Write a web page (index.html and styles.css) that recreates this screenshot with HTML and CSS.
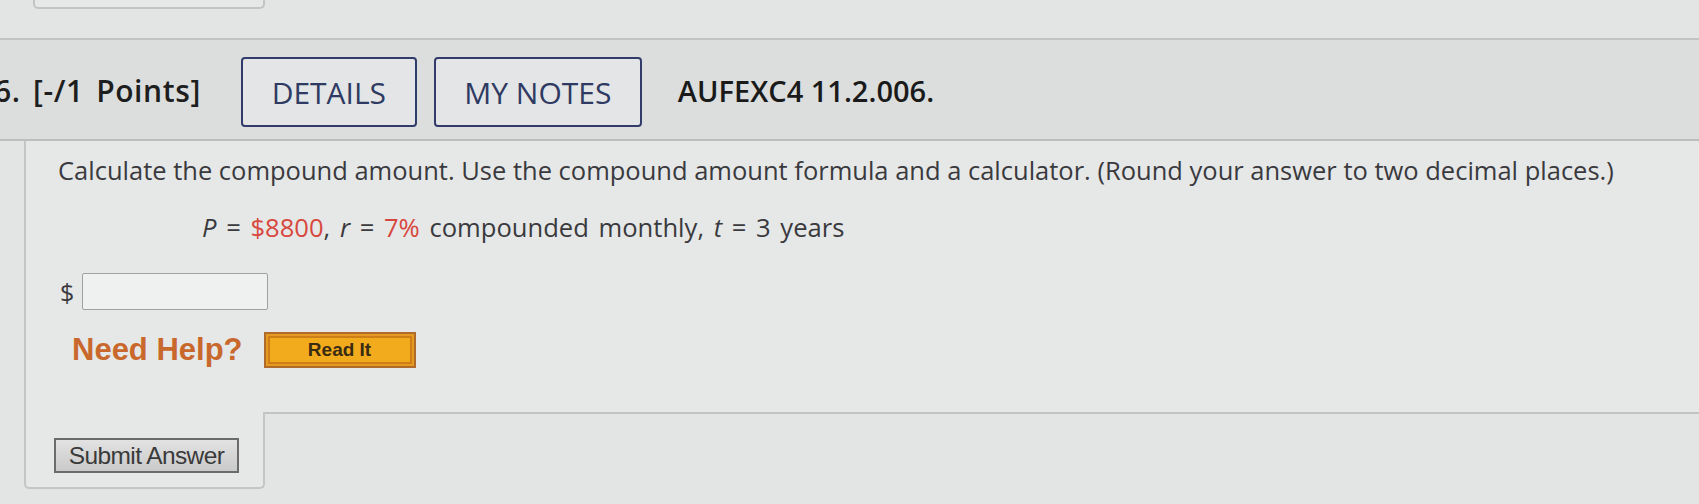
FILE: index.html
```html
<!DOCTYPE html>
<html lang="en">
<head>
<meta charset="utf-8">
<title>AUFEXC4 11.2.006</title>
<link rel="stylesheet" href="styles.css">
</head>
<body>
<div class="prev"></div>
<div class="header">
  <span class="num">6. [-/1 Points]</span>
  <button class="tab-btn details">DETAILS</button>
  <button class="tab-btn notes">MY NOTES</button>
  <span class="code">AUFEXC4 11.2.006.</span>
</div>
<div class="qbox">
  <p class="prompt">Calculate the compound amount. Use the compound amount formula and a calculator. (Round your answer to two decimal places.)</p>
  <p class="formula"><i>P</i> = <span class="red">$8800</span>, <i>r</i> = <span class="red">7%</span> compounded monthly, <i>t</i> = 3 years</p>
  <div class="answer"><span class="dollar">$</span><span class="input"></span></div>
  <div class="help"><span class="need">Need Help?</span><span class="readit"><span class="readit-in">Read It</span></span></div>
</div>
<div class="bottom">
  <div class="tab"><button class="submit">Submit Answer</button></div>
  <div class="filler"></div>
</div>
</body>
</html>
```
FILE: styles.css
```css
html, body {
  margin: 0;
  padding: 0;
}
body {
  width: 1699px;
  height: 504px;
  overflow: hidden;
  background: #e3e5e5;
  font-family: "Open Sans", "Liberation Sans", sans-serif;
  color: #333;
}
.prev {
  margin-left: 33px;
  width: 228px;
  height: 7px;
  border: 2px solid #c3c5c5;
  border-top: none;
  border-radius: 0 0 5px 5px;
  background: #e6e8e8;
}
.header {
  margin-top: 29px;
  height: 99px;
  border-top: 2px solid #c2c4c4;
  border-bottom: 2px solid #bcbebe;
  background: #dcdede;
  display: flex;
  align-items: flex-start;
}
.num {
  margin-left: -6px;
  margin-top: 30px;
  font-size: 30px;
  font-weight: 600;
  letter-spacing: 0.6px;
  word-spacing: 4px;
  color: #1e1e1e;
  white-space: nowrap;
}
.tab-btn {
  margin-top: 17px;
  height: 70px;
  border: 2px solid #313c6a;
  border-radius: 4px;
  background: #e3e5e6;
  color: #2f3a62;
  font-family: "Open Sans", sans-serif;
  font-size: 30px;
  font-weight: 400;
  padding: 0;
}
.details {
  margin-left: 40px;
  width: 176px;
}
.notes {
  margin-left: 17px;
  width: 208px;
}
.code {
  margin-left: 36px;
  margin-top: 31px;
  font-size: 29px;
  font-weight: 600;
  color: #1a1a1a;
  white-space: nowrap;
}
.qbox {
  border-left: 2px solid #c4c6c6;
  margin-left: 24px;
  background: #e6e8e8;
  padding: 12px 0 44px 32px;
}
.prompt {
  margin: 0;
  font-size: 25.5px;
  line-height: 34px;
  color: #3a3a3e;
  white-space: nowrap;
}
.formula {
  margin: 24px 0 0 144px;
  font-size: 25.6px;
  line-height: 34px;
  word-spacing: 3px;
  color: #3a3a3e;
  white-space: nowrap;
}
.red {
  color: #d8473d;
}
.answer {
  margin-top: 28px;
  display: flex;
  align-items: center;
  height: 37px;
}
.dollar {
  margin-left: 2px;
  font-size: 25px;
  color: #3a3a3e;
}
.input {
  margin-left: 8px;
  width: 184px;
  height: 35px;
  border: 1px solid #9ea0a2;
  border-radius: 2px;
  background: #eff1f1;
}
.help {
  margin-top: 22px;
  display: flex;
  align-items: center;
  height: 36px;
}
.need {
  margin-left: 14px;
  font-family: "Liberation Sans", Arial, sans-serif;
  font-weight: 700;
  font-size: 31px;
  color: #c9682c;
}
.readit {
  margin-left: 21px;
  width: 152px;
  height: 36px;
  box-sizing: border-box;
  border: 2px solid #b06a2a;
  background: #e79a22;
  padding: 2px;
  display: flex;
}
.readit-in {
  flex: 1;
  border: 2px solid #cd7e16;
  background: #f3ab1e;
  display: flex;
  align-items: center;
  justify-content: center;
  font-family: "Liberation Sans", Arial, sans-serif;
  font-weight: 700;
  font-size: 19px;
  color: #3a2c12;
}
.bottom {
  display: flex;
  margin-left: 24px;
}
.tab {
  width: 209px;
  height: 75px;
  border: 2px solid #c4c6c6;
  border-top: none;
  border-radius: 0 0 5px 5px;
  background: #e6e8e8;
  padding-left: 28px;
}
.submit {
  margin-top: 26px;
  width: 185px;
  height: 35px;
  border: 2px solid #696b6d;
  background: linear-gradient(#e2e2e2, #cacaca);
  font-family: "Liberation Sans", Arial, sans-serif;
  font-size: 24.5px;
  letter-spacing: -0.6px;
  color: #3a3a3a;
  padding: 0;
}
.filler {
  flex: 1;
  border-top: 2px solid #c2c4c4;
  height: 75px;
  background: #e3e5e5;
}
```
